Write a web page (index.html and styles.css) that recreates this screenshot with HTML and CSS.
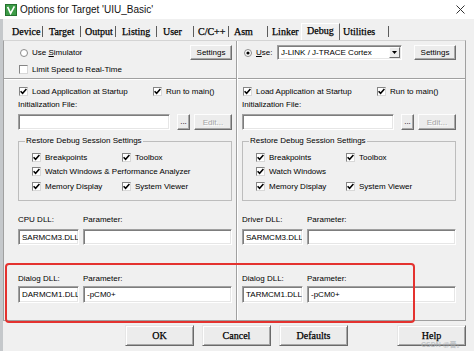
FILE: index.html
```html
<!DOCTYPE html>
<html>
<head>
<meta charset="utf-8">
<title>Options for Target</title>
<link rel="stylesheet" href="styles.css">
</head>
<body>
<div class="window">
  <div class="titlebar">
    <svg class="app-icon" width="12" height="12" viewBox="0 0 12 12">
      <rect x="0.5" y="0.5" width="11" height="11" fill="#3d9c47" stroke="#24722e"/>
      <path d="M2.6 2.8 L5.6 9.4 L9.4 2.4" fill="none" stroke="#fff" stroke-width="1.6"/>
    </svg>
    <span class="title">Options for Target 'UIU_Basic'</span>
    <svg class="close" width="9" height="9" viewBox="0 0 9 9">
      <path d="M0.5 0.5 L8.5 8.5 M8.5 0.5 L0.5 8.5" stroke="#333" stroke-width="1"/>
    </svg>
  </div>
  <div class="frame">
    <div class="strip"></div>
    <div class="dialog">
      <div class="tabs">
        <span class="tab t-device">Device</span>
        <span class="tab t-target">Target</span>
        <span class="tab t-output">Output</span>
        <span class="tab t-listing">Listing</span>
        <span class="tab t-user">User</span>
        <span class="tab t-cc">C/C++</span>
        <span class="tab t-asm">Asm</span>
        <span class="tab t-linker">Linker</span>
        <span class="tab t-debug active">Debug</span>
        <span class="tab t-util">Utilities</span>
      </div>
      <div class="panel">
        <div class="col col-left">
          <div class="row r-top">
            <span class="check"><svg class="rb" width="8" height="8" viewBox="0 0 8 8"><circle cx="4" cy="4" r="3.5" fill="#fff" stroke="#8a8a8a"/></svg><span>Use <u>S</u>imulator</span></span>
            <span class="btn btn-settings">Settings</span>
          </div>
          <div class="row r-limit">
            <span class="check"><span class="cb"></span><span>Limit Speed to Real-Time</span></span>
          </div>
          <div class="sep sep-left"></div>
          <div class="row r-load">
            <span class="check w-load"><span class="cb"><svg width="7" height="7" viewBox="0 0 7 7"><path d="M0.6 3.2 L2.6 5.3 L6.4 1" fill="none" stroke="#000" stroke-width="1.5"/></svg></span><span>Load Application at Startup</span></span>
            <span class="check"><span class="cb"><svg width="7" height="7" viewBox="0 0 7 7"><path d="M0.6 3.2 L2.6 5.3 L6.4 1" fill="none" stroke="#000" stroke-width="1.5"/></svg></span><span>Run to main()</span></span>
          </div>
          <div class="lbl r-init">Initialization File:</div>
          <div class="row r-file">
            <span class="field file"></span>
            <span class="btn dots">...</span>
            <span class="btn editbtn">Edit...</span>
          </div>
          <fieldset class="group">
            <legend>Restore Debug Session Settings</legend>
            <div class="group-grid">
              <span class="check"><span class="cb"><svg width="7" height="7" viewBox="0 0 7 7"><path d="M0.6 3.2 L2.6 5.3 L6.4 1" fill="none" stroke="#000" stroke-width="1.5"/></svg></span><span>Breakpoints</span></span>
              <span class="check"><span class="cb"><svg width="7" height="7" viewBox="0 0 7 7"><path d="M0.6 3.2 L2.6 5.3 L6.4 1" fill="none" stroke="#000" stroke-width="1.5"/></svg></span><span>Toolbox</span></span>
              <span class="check span2"><span class="cb"><svg width="7" height="7" viewBox="0 0 7 7"><path d="M0.6 3.2 L2.6 5.3 L6.4 1" fill="none" stroke="#000" stroke-width="1.5"/></svg></span><span>Watch Windows &amp; Performance Analyzer</span></span>
              <span class="check"><span class="cb"><svg width="7" height="7" viewBox="0 0 7 7"><path d="M0.6 3.2 L2.6 5.3 L6.4 1" fill="none" stroke="#000" stroke-width="1.5"/></svg></span><span>Memory Display</span></span>
              <span class="check"><span class="cb"><svg width="7" height="7" viewBox="0 0 7 7"><path d="M0.6 3.2 L2.6 5.3 L6.4 1" fill="none" stroke="#000" stroke-width="1.5"/></svg></span><span>System Viewer</span></span>
            </div>
          </fieldset>
          <div class="dll dll-cpu">
            <span class="lbl">CPU DLL:</span>
            <span class="lbl">Parameter:</span>
            <span class="field">SARMCM3.DLL</span>
            <span class="field"></span>
          </div>
          <div class="dll dll-dlg">
            <span class="lbl">Dialog DLL:</span>
            <span class="lbl">Parameter:</span>
            <span class="field">DARMCM1.DLL</span>
            <span class="field">-pCM0+</span>
          </div>
        </div>
        <div class="col col-right">
          <div class="row r-top">
            <span class="check use"><svg class="rb" width="8" height="8" viewBox="0 0 8 8"><circle cx="4" cy="4" r="3.5" fill="#fff" stroke="#8a8a8a"/><circle cx="4" cy="4" r="1.6" fill="#000"/></svg><span><u>U</u>se:</span></span>
            <span class="combo"><span class="combo-text">J-LINK / J-TRACE Cortex</span><span class="arrow"><svg width="5" height="3" viewBox="0 0 5 3"><path d="M0 0 H5 L2.5 3 Z" fill="#000"/></svg></span></span>
            <span class="btn btn-settings">Settings</span>
          </div>
          <div class="row r-limit"></div>
          <div class="sep sep-right"></div>
          <div class="row r-load">
            <span class="check w-load"><span class="cb"><svg width="7" height="7" viewBox="0 0 7 7"><path d="M0.6 3.2 L2.6 5.3 L6.4 1" fill="none" stroke="#000" stroke-width="1.5"/></svg></span><span>Load Application at Startup</span></span>
            <span class="check"><span class="cb"><svg width="7" height="7" viewBox="0 0 7 7"><path d="M0.6 3.2 L2.6 5.3 L6.4 1" fill="none" stroke="#000" stroke-width="1.5"/></svg></span><span>Run to main()</span></span>
          </div>
          <div class="lbl r-init">Initialization File:</div>
          <div class="row r-file">
            <span class="field file"></span>
            <span class="btn dots">...</span>
            <span class="btn editbtn">Edit...</span>
          </div>
          <fieldset class="group">
            <legend>Restore Debug Session Settings</legend>
            <div class="group-grid">
              <span class="check"><span class="cb"><svg width="7" height="7" viewBox="0 0 7 7"><path d="M0.6 3.2 L2.6 5.3 L6.4 1" fill="none" stroke="#000" stroke-width="1.5"/></svg></span><span>Breakpoints</span></span>
              <span class="check"><span class="cb"><svg width="7" height="7" viewBox="0 0 7 7"><path d="M0.6 3.2 L2.6 5.3 L6.4 1" fill="none" stroke="#000" stroke-width="1.5"/></svg></span><span>Toolbox</span></span>
              <span class="check span2"><span class="cb"><svg width="7" height="7" viewBox="0 0 7 7"><path d="M0.6 3.2 L2.6 5.3 L6.4 1" fill="none" stroke="#000" stroke-width="1.5"/></svg></span><span>Watch Windows</span></span>
              <span class="check"><span class="cb"><svg width="7" height="7" viewBox="0 0 7 7"><path d="M0.6 3.2 L2.6 5.3 L6.4 1" fill="none" stroke="#000" stroke-width="1.5"/></svg></span><span>Memory Display</span></span>
              <span class="check"><span class="cb"><svg width="7" height="7" viewBox="0 0 7 7"><path d="M0.6 3.2 L2.6 5.3 L6.4 1" fill="none" stroke="#000" stroke-width="1.5"/></svg></span><span>System Viewer</span></span>
            </div>
          </fieldset>
          <div class="dll dll-cpu">
            <span class="lbl">Driver DLL:</span>
            <span class="lbl">Parameter:</span>
            <span class="field">SARMCM3.DLL</span>
            <span class="field"></span>
          </div>
          <div class="dll dll-dlg">
            <span class="lbl">Dialog DLL:</span>
            <span class="lbl">Parameter:</span>
            <span class="field">TARMCM1.DLL</span>
            <span class="field">-pCM0+</span>
          </div>
        </div>
      </div>
      <div class="buttons">
        <span class="dbtn">OK</span>
        <span class="dbtn">Cancel</span>
        <span class="dbtn">Defaults</span>
        <span class="dbtn help">Help</span>
      </div>
    </div>
  </div>
</div>
<div class="annotation"></div>
<span class="watermark">CSDN @晋。</span>
</body>
</html>
```
FILE: styles.css
```css
* { box-sizing: border-box; }
html, body { margin: 0; padding: 0; }
body {
  width: 474px;
  height: 351px;
  overflow: hidden;
  position: relative;
  background: #f0f0f0;
  font-family: "Liberation Sans", Arial, sans-serif;
  font-size: 8px;
  color: #000;
}
.window { display: flex; flex-direction: column; height: 351px; }

/* title bar */
.titlebar {
  height: 19px;
  flex: none;
  background: #fff;
  display: flex;
  align-items: center;
  padding-left: 5px;
}
.app-icon { display: block; flex: none; }
.title { margin-left: 3px; font-size: 10px; line-height: 12px; color: #111; }
.close { display: block; margin-left: auto; margin-right: 9px; }

.frame { flex: 1; display: flex; min-height: 0; }
.strip { width: 3px; flex: none; background: #c5c8cb; }
.dialog { flex: 1; display: flex; flex-direction: column; min-width: 0; }

/* tabs */
.tabs {
  height: 21px;
  flex: none;
  display: flex;
  align-items: flex-end;
  font-family: "Liberation Serif", "Times New Roman", serif;
  font-size: 10px;
  color: #000;
}
.tab {
  height: 11px;
  line-height: 11px;
  margin-bottom: 3px;
  padding-left: 4px;
  border-right: 1px solid #5c5c5c;
  white-space: nowrap;
  -webkit-text-stroke: 0.25px #000;
}
.t-device { width: 40px; padding-left: 9px; }
.t-target { width: 38px; padding-left: 6px; }
.t-output { width: 35px; padding-left: 4px; }
.t-listing { width: 41px; padding-left: 6px; }
.t-user { width: 37px; padding-left: 6px; }
.t-cc { width: 35px; padding-left: 4px; }
.t-asm { width: 39px; padding-left: 5px; }
.t-linker { width: 33px; padding-left: 4px; border-right: none; }
.t-debug { width: 39px; padding-left: 5px; }
.t-util { width: 49px; padding-left: 3px; }
.tab.active {
  height: 17px;
  line-height: 14px;
  margin-bottom: 0;
  border-left: 1px solid #fff;
  border-top: 1px solid #fff;
  border-right: 1px solid #6a6a6a;
}

/* panel */
.panel {
  height: 281px;
  flex: none;
  margin-right: 8px;
  border: 1px solid #a0a0a0;
  border-top-color: #d4d4d4;
  display: grid;
  grid-template-columns: 232px 1fr;
}
.col { display: flex; flex-direction: column; min-width: 0; }
.col-left { padding: 4px 4px 0 14px; }
.col-right {
  padding: 4px 9px 0 5px;
  border-left: 1px solid #a0a0a0;
  box-shadow: inset 1px 0 0 #fff;
}

.row { display: flex; align-items: center; flex: none; }
.r-top { height: 15px; }
.r-limit { height: 12px; margin-top: 3px; }
.sep {
  height: 2px;
  flex: none;
  margin-top: 3px;
  border-top: 1px solid #a0a0a0;
  border-bottom: 1px solid #fff;
}
.sep-left { margin-left: -14px; margin-right: -4px; }
.sep-right { margin-left: -4px; margin-right: -9px; }
.r-load { height: 12px; margin-top: 5px; }
.r-init { height: 10px; margin-top: 3px; }
.r-file { height: 16px; margin-top: 4px; }

.lbl { line-height: 10px; height: 10px; white-space: nowrap; }

/* check boxes and radios */
.check { display: flex; align-items: center; height: 12px; white-space: nowrap; }
.w-load { width: 134px; }
.cb {
  width: 9px;
  height: 9px;
  flex: none;
  margin: 0 4px 0 1px;
  background: #fff;
  border: 1px solid;
  border-color: #858585 #d8d8d8 #d8d8d8 #858585;
  display: flex;
  align-items: center;
  justify-content: center;
}
.cb svg { display: block; }
.rb { display: block; flex: none; margin: 0 4px 0 2px; }
.use { width: 35px; }
u { text-decoration: underline; text-underline-offset: 1px; }

/* buttons */
.btn {
  display: flex;
  align-items: center;
  justify-content: center;
  height: 15px;
  flex: none;
  background: #ececec;
  border: 1px solid;
  border-color: #fdfdfd #6e6e6e #6e6e6e #fdfdfd;
  box-shadow: inset -1px -1px 0 #a8a8a8;
  white-space: nowrap;
}
.btn-settings { width: 42px; margin-left: auto; }
.dots { width: 13px; height: 16px; margin-left: 7px; align-items: flex-end; padding-bottom: 3px; }
.editbtn { width: 38px; height: 16px; margin-left: 4px; color: #a3a3a3; text-shadow: 1px 1px 0 #fff; }

/* edit fields */
.field {
  height: 16px;
  min-width: 0;
  display: flex;
  align-items: center;
  padding-left: 3px;
  white-space: nowrap;
  overflow: hidden;
  background: #fff;
  border: 1px solid;
  border-color: #a0a0a0 #fff #fff #a0a0a0;
  box-shadow: inset 1px 1px 0 #7d7d7d, inset -1px -1px 0 #e6e6e6;
}
.file { flex: 1; }

.combo {
  width: 125px;
  height: 15px;
  flex: none;
  display: flex;
  align-items: center;
  padding-left: 3px;
  background: #fff;
  border: 1px solid;
  border-color: #a0a0a0 #fff #fff #a0a0a0;
  box-shadow: inset 1px 1px 0 #7d7d7d, inset -1px -1px 0 #e6e6e6;
  white-space: nowrap;
}
.combo-text { flex: 1; overflow: hidden; }
.arrow {
  width: 11px;
  height: 11px;
  margin-right: 1px;
  flex: none;
  display: flex;
  align-items: center;
  justify-content: center;
  background: #ececec;
  border: 1px solid;
  border-color: #fdfdfd #6e6e6e #6e6e6e #fdfdfd;
}
.arrow svg { display: block; }

/* group box */
.group {
  margin: 6px 0 0 0;
  padding: 0 0 8px 6px;
  border: 1px solid #bdbdbd;
  min-width: 0;
  flex: none;
}
.group legend { padding: 0 1px; line-height: 10px; height: 10px; }
.group-grid {
  display: grid;
  grid-template-columns: 90px auto;
  grid-auto-rows: 12px;
  row-gap: 2.5px;
  margin: 5px 0 0 6px;
}
.span2 { grid-column: 1 / span 2; }

/* dll rows */
.dll { display: grid; grid-template-columns: 61px 1fr; column-gap: 4px; flex: none; }
.dll-cpu { margin-top: 14px; grid-template-rows: 10px 16px; row-gap: 4px; }
.dll-dlg { margin-top: 29px; grid-template-rows: 10px 17px; row-gap: 2px; }
.dll-dlg .field { height: 17px; }

/* bottom buttons */
.buttons {
  flex: 1;
  display: flex;
  align-items: flex-start;
  gap: 8px;
  padding: 4px 8px 0 122px;
}
.dbtn {
  width: 69px;
  height: 21px;
  display: flex;
  align-items: center;
  justify-content: center;
  font-family: "Liberation Serif", "Times New Roman", serif;
  font-size: 10px;
  color: #000;
  -webkit-text-stroke: 0.25px #000;
  background: #ececec;
  border: 1px solid;
  border-color: #e6e6e6 #6a6a6a #6a6a6a #e6e6e6;
  box-shadow: inset 1px 1px 0 #fff, inset -1px -1px 0 #a8a8a8;
}
.help { margin-left: auto; }

/* annotation overlay */
.annotation {
  position: absolute;
  left: 5px;
  top: 263px;
  width: 410px;
  height: 60px;
  border: 2px solid #e4322f;
  border-radius: 4px;
}
.watermark {
  position: absolute;
  left: 421px;
  top: 341px;
  font-family: "Liberation Sans", "Noto Sans CJK SC", sans-serif;
  font-size: 7px;
  line-height: 8px;
  font-weight: bold;
  color: rgba(175, 180, 185, 0.75);
}
```
